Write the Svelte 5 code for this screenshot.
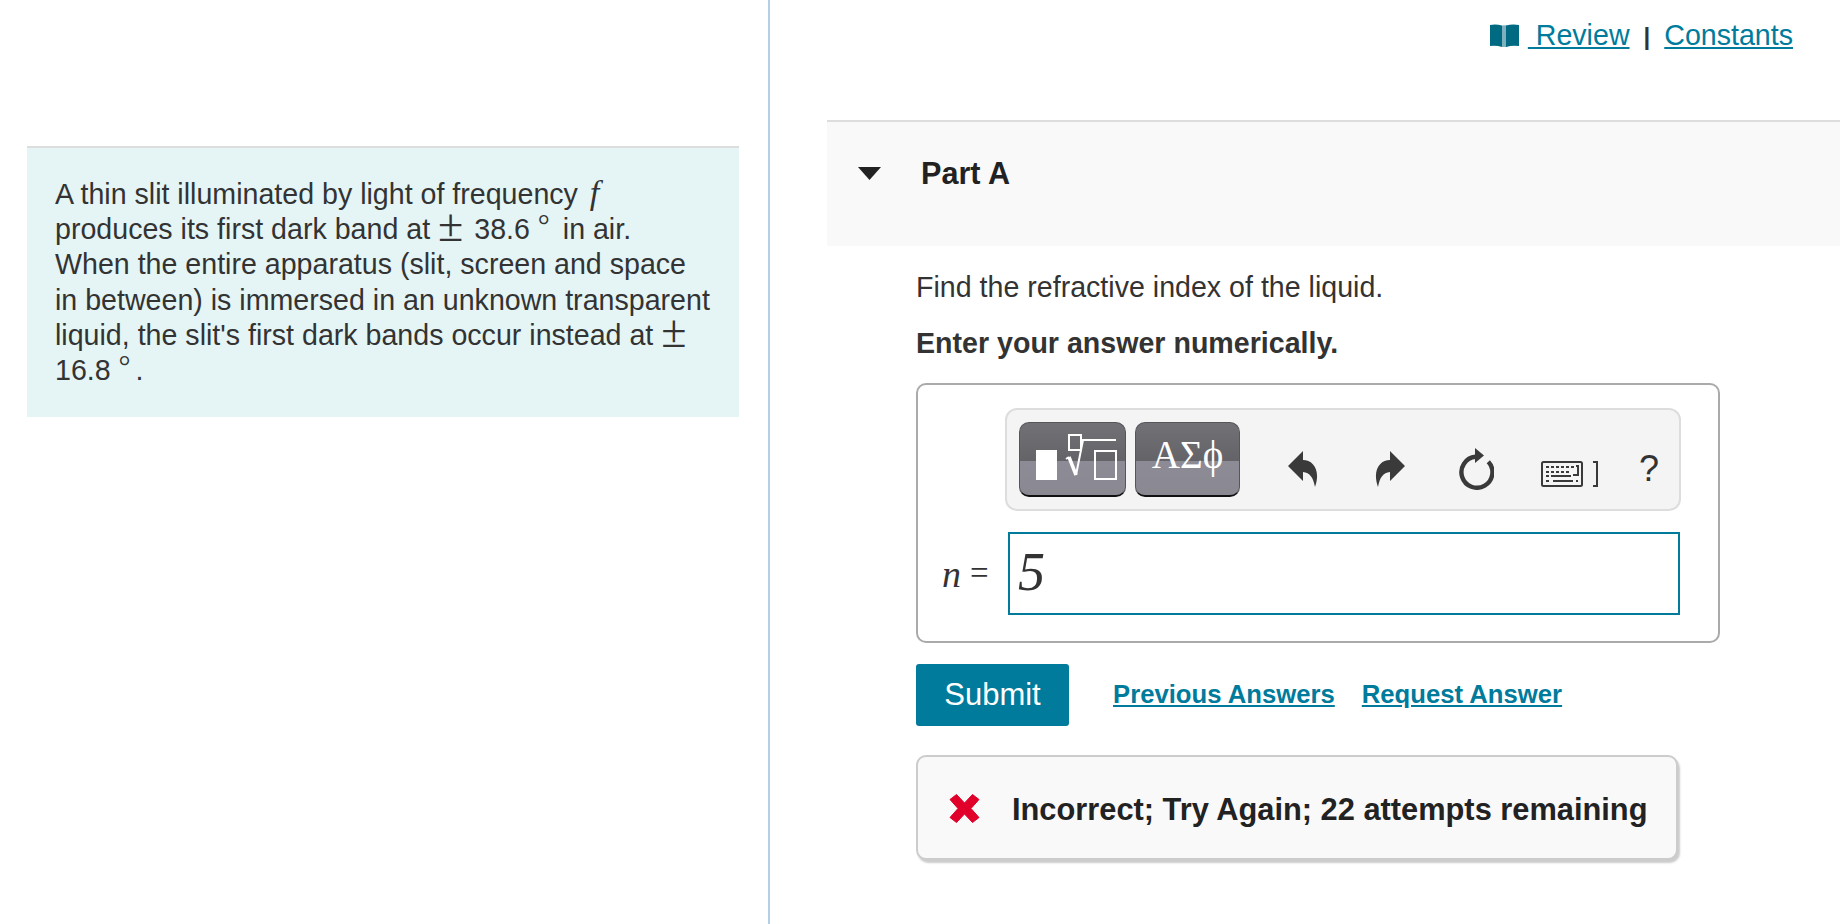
<script>
  let answer = "5";
</script>

<div class="page">
  <aside class="left">
    <div class="intro">
      <p>A thin slit illuminated by light of frequency <i class="var">f</i><br>
      produces its first dark band at <span class="sym">±</span> 38.6 <span class="deg">°</span> in air.<br>
      When the entire apparatus (slit, screen and space in between) is immersed in an unknown transparent liquid, the slit's first dark bands occur instead at <span class="sym">±</span>
      16.8 <span class="deg">°</span>.</p>
    </div>
  </aside>

  <main class="right">
    <nav class="top">
      <svg class="book" viewBox="0 0 29 23" width="29" height="23">
        <path d="M0 1 Q6 0 12 1.500 V23 Q6 21 0 22Z" fill="#006a82"/>
        <path d="M12 1.500 Q14 1 17 1.500 V23 H12Z" fill="#7fb0bf"/>
        <path d="M16 1.500 Q22 0 29 1 V22 Q22 21 16 23Z" fill="#006a82"/>
      </svg>
      <a href="#review">&nbsp;Review</a>
      <span class="sep">|</span>
      <a href="#constants">Constants</a>
    </nav>

    <section class="part">
      <svg class="caret" viewBox="0 0 23 13" width="23" height="13"><path d="M0 0H23L11.5 13Z" fill="#222"/></svg>
      <h2>Part A</h2>
    </section>

    <div class="body">
      <p class="question">Find the refractive index of the liquid.</p>
      <p class="hint">Enter your answer numerically.</p>

      <div class="answer">
        <div class="toolbar">
          <div class="tool tool-wide">
            <svg viewBox="0 0 107 75" width="107" height="75" fill="none" stroke="#fff" stroke-width="2">
              <rect x="17" y="28" width="21" height="30" fill="#fff" stroke="none"/>
              <rect x="50" y="13" width="12" height="15"/>
              <path d="M47 37 L50 35"/>
              <path d="M50 35 L57 53" stroke-width="3.500"/>
              <path d="M57 53 L64 18 H97"/>
              <rect x="76" y="29" width="21" height="28"/>
            </svg>
          </div>
          <div class="tool tool-greek">ΑΣϕ</div>
          <svg class="ico undo" viewBox="0 0 30 36" width="30" height="36">
            <path d="M0 15 L15 0 V9 C25 9 33 19 27 36 C25 26 22 22 15 21 V30Z" fill="#3a3a3a"/>
          </svg>
          <svg class="ico redo" viewBox="0 0 30 36" width="30" height="36">
            <path d="M30 15 L15 0 V9 C5 9 -3 19 3 36 C5 26 8 22 15 21 V30Z" fill="#3a3a3a"/>
          </svg>
          <svg class="ico reset" viewBox="0 0 36 42" width="36" height="42">
            <path d="M30.300 13.700 A15.500 15.500 0 1 1 17.500 8.800" fill="none" stroke="#3a3a3a" stroke-width="4.400"/>
            <path d="M17 0 L26 7.500 L17 15Z" fill="#3a3a3a"/>
          </svg>
          <svg class="ico keys" viewBox="0 0 57 26" width="57" height="26">
            <rect x="1" y="1" width="40" height="24" rx="1.500" fill="none" stroke="#3a3a3a" stroke-width="2"/>
            <path d="M5 6h3M10 6h3M15 6h3M20 6h3M25 6h3M30 6h3M35 5h2v9h-5M5 11h3M10 11h3M15 11h3M20 11h3M25 11h3M5 15h3M10 15h20M5 20h3M12 20h20M35 20h2" stroke="#3a3a3a" stroke-width="2" fill="none"/>
            <path d="M52 1h4v24h-4" fill="none" stroke="#3a3a3a" stroke-width="2"/>
          </svg>
          <span class="help">?</span>
        </div>

        <div class="entry">
          <span class="label"><i>n</i><span class="eq">=</span></span>
          <div class="field">{answer}</div>
        </div>
      </div>

      <div class="actions">
        <button type="button">Submit</button>
        <a href="#prev">Previous Answers</a>
        <a href="#req">Request Answer</a>
      </div>

      <div class="feedback">
        <svg viewBox="0 0 31 29" width="31" height="29">
          <path d="M7.500 0.500 L15.500 9 L23.500 0.500 L30 5.500 L22 14.500 L30 23.500 L23.500 28.500 L15.500 20 L7.500 28.500 L1 23.500 L9 14.500 L1 5.500Z" fill="#e0002a" stroke="#e0002a" stroke-linejoin="round"/>
        </svg>
        <strong>Incorrect; Try Again; 22 attempts remaining</strong>
      </div>
    </div>
  </main>
</div>

<style>
  :global(body) {
    margin: 0;
    background: #fff;
  }

  .page {
    display: flex;
    height: 924px;
    overflow: hidden;
    font-family: "Liberation Sans", Arial, sans-serif;
    font-size: 28.6px;
    color: #333;
  }

  .left {
    box-sizing: border-box;
    flex: 0 0 770px;
    padding: 146px 29px 0 27px;
    border-right: 2px solid #b5d0e4;
  }

  .intro {
    box-sizing: border-box;
    height: 271px;
    padding: 27px 24px 27px 28px;
    background: #e5f5f6;
    border-top: 2px solid #ddd;
  }

  .intro p {
    margin: 0;
    line-height: 35.2px;
  }

  .var {
    font-family: "Liberation Serif", serif;
    font-size: 34px;
    margin-left: 4px;
  }

  .sym {
    margin-right: 3px;
    font-family: "Liberation Serif", serif;
    font-size: 46px;
    line-height: 0;
    vertical-align: -2px;
  }

  .deg {
    font-family: "Liberation Serif", serif;
    font-size: 30px;
    line-height: 0;
    vertical-align: 4px;
    margin-right: 5px;
  }

  .right {
    flex: 1;
    min-width: 0;
    padding-left: 57px;
  }

  .top {
    display: flex;
    align-items: baseline;
    justify-content: flex-end;
    height: 120px;
    box-sizing: border-box;
    padding: 19px 47px 0 0;
  }

  .book {
    align-self: flex-start;
    margin: 5px 9px 0 0;
  }

  a {
    color: #007b9c;
    text-decoration: underline;
  }

  .sep {
    margin: 0 14px;
    font-size: 24px;
    font-weight: 700;
  }

  .part {
    display: flex;
    align-items: center;
    height: 126px;
    box-sizing: border-box;
    padding: 0 0 0 31px;
    background: #f9f9f9;
    border-top: 2px solid #ddd;
  }

  .caret {
    margin: -22px 40px 0 0;
  }

  h2 {
    margin: -22px 0 0;
    font-size: 30.6px;
    color: #222;
  }

  .body {
    padding: 23px 0 0 89px;
  }

  .body p {
    margin: 0;
    line-height: 36px;
  }

  .hint {
    margin-top: 20px !important;
    font-weight: 700;
  }

  .answer {
    box-sizing: border-box;
    width: 804px;
    height: 260px;
    margin-top: 22px;
    padding: 23px 0 0 87px;
    border: 2px solid #aaa;
    border-radius: 10px;
  }

  .toolbar {
    display: flex;
    align-items: flex-start;
    box-sizing: border-box;
    width: 676px;
    height: 103px;
    padding: 12px 0 0 12px;
    background: #f4f4f4;
    border: 2px solid #ddd;
    border-radius: 12px;
  }

  .tool {
    display: flex;
    align-items: center;
    justify-content: center;
    box-sizing: border-box;
    height: 75px;
    color: #fff;
    background: linear-gradient(#727276, #646468 53%, #8d8c96 53%, #8a8992);
    border: 1px solid #55555a;
    border-bottom: 2px solid #111;
    border-radius: 10px;
  }

  .tool-wide {
    width: 107px;
  }

  .tool-wide svg {
    flex: none;
  }

  .tool-greek {
    width: 105px;
    margin-left: 9px;
    font-family: "Liberation Serif", serif;
    font-size: 39px;
    padding-bottom: 9px;
  }

  .ico {
    flex: none;
  }

  .undo {
    margin: 29px 0 0 48px;
  }

  .redo {
    margin: 29px 0 0 57px;
  }

  .reset {
    margin: 26px 0 0 53px;
  }

  .keys {
    margin: 39px 0 0 47px;
  }

  .help {
    margin: 25px 0 0 0;
    padding-left: 41px;
    font-size: 36px;
    line-height: 44px;
    color: #333;
  }

  .entry {
    display: flex;
    align-items: center;
    margin: 21px 0 0 -87px;
  }

  .label {
    display: flex;
    align-items: center;
    flex: none;
    width: 90px;
    padding-left: 24px;
    box-sizing: border-box;
    font-family: "Liberation Serif", serif;
    font-size: 38px;
  }

  .eq {
    margin-left: 9px;
    font-size: 33px;
  }

  .field {
    box-sizing: border-box;
    width: 672px;
    height: 83px;
    padding: 0 0 0 8px;
    border: 2px solid #007b9c;
    font-family: "Liberation Serif", serif;
    font-style: italic;
    font-size: 54px;
    line-height: 76px;
  }

  .actions {
    display: flex;
    align-items: center;
    margin-top: 21px;
    font-size: 25.7px;
    font-weight: 700;
  }

  .actions a {
    margin: -2px 27px 0 0;
  }

  button {
    width: 153px;
    height: 62px;
    margin-right: 44px;
    padding: 0;
    border: 0;
    border-radius: 3px;
    background: #007b9c;
    color: #fff;
    font: 400 31px "Liberation Sans", Arial, sans-serif;
  }

  .feedback {
    display: flex;
    align-items: center;
    gap: 32px;
    box-sizing: border-box;
    width: 762px;
    height: 105px;
    margin-top: 29px;
    padding: 5px 0 0 31px;
    background: #f9f9f9;
    border: 2px solid #ccc;
    border-radius: 10px;
    box-shadow: 2px 3px 2px #ccc;
    color: #222;
    font-size: 30.8px;
  }

  .feedback svg {
    margin-top: -4px;
  }
</style>
